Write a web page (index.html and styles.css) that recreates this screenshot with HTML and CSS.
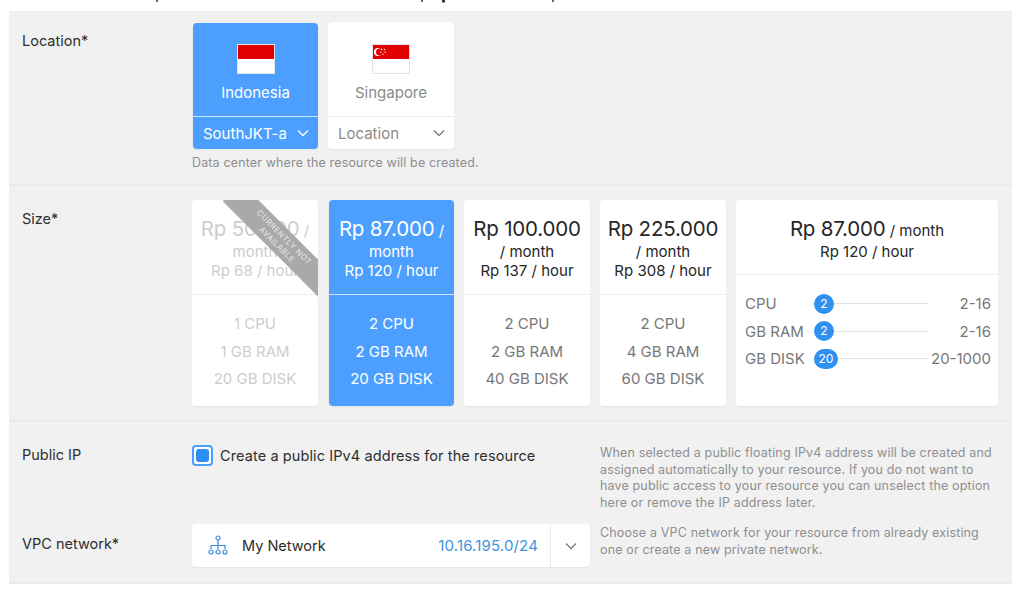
FILE: index.html
```html
<!DOCTYPE html>
<html lang="en">
<head>
    <meta charset="UTF-8">
    <meta name="viewport" content="width=device-width, initial-scale=1.0">
    <title>Create resource</title>
    <link rel="stylesheet" href="styles.css">
</head>
<body>
    <div class="cut-line">
        <span class="cut-a">,</span>
        <span class="cut-b">,</span>
        <span class="cut-c">p</span>
        <span class="cut-d">,</span>
    </div>

    <div class="panel">
        <section class="row row-location">
            <div class="label">Location*</div>
            <div>
                <div class="locations">
                    <div class="loc-card selected">
                        <div class="loc-main">
                            <svg class="flag" viewBox="0 0 38 30">
                                <rect x="0.5" y="0.5" width="37" height="29" fill="#fff" stroke="#e4e4e4"/>
                                <rect x="1" y="1" width="36" height="14" fill="#e10000"/>
                            </svg>
                            <span>Indonesia</span>
                        </div>
                        <div class="loc-select">
                            <span>SouthJKT-a</span>
                            <svg class="chevron" viewBox="0 0 12 8"><path d="M1 1.5l5 5 5-5"/></svg>
                        </div>
                    </div>
                    <div class="loc-card">
                        <div class="loc-main">
                            <svg class="flag" viewBox="0 0 38 30">
                                <rect x="0.5" y="0.5" width="37" height="29" fill="#fff" stroke="#e4e4e4"/>
                                <rect x="1" y="1" width="36" height="14" fill="#e10000"/>
                                <circle cx="6" cy="8" r="4" fill="#fff"/>
                                <circle cx="7.6" cy="8" r="3.6" fill="#e10000"/>
                                <circle cx="9.5" cy="5.5" r=".7" fill="#fff"/>
                                <circle cx="12.4" cy="5.5" r=".7" fill="#fff"/>
                                <circle cx="13.2" cy="8.3" r=".7" fill="#fff"/>
                                <circle cx="11" cy="10.2" r=".7" fill="#fff"/>
                                <circle cx="8.8" cy="8.3" r=".7" fill="#fff"/>
                            </svg>
                            <span>Singapore</span>
                        </div>
                        <div class="loc-select">
                            <span>Location</span>
                            <svg class="chevron" viewBox="0 0 12 8"><path d="M1 1.5l5 5 5-5"/></svg>
                        </div>
                    </div>
                </div>
                <p class="hint hint-location">Data center where the resource will be created.</p>
            </div>
        </section>

        <section class="row row-size">
            <div class="label">Size*</div>
            <div class="sizes">
                <div class="size-card disabled">
                    <div class="ribbon"><span>CURRENTLY NOT AVAILABLE</span></div>
                    <div class="size-price">
                        <div><span class="big">Rp 50.000</span> /</div>
                        <div>month</div>
                        <div>Rp 68 / hour</div>
                    </div>
                    <div class="size-specs">
                        <div>1 CPU</div>
                        <div>1 GB RAM</div>
                        <div>20 GB DISK</div>
                    </div>
                </div>
                <div class="size-card selected">
                    <div class="size-price">
                        <div><span class="big">Rp 87.000</span> /</div>
                        <div>month</div>
                        <div>Rp 120 / hour</div>
                    </div>
                    <div class="size-specs">
                        <div>2 CPU</div>
                        <div>2 GB RAM</div>
                        <div>20 GB DISK</div>
                    </div>
                </div>
                <div class="size-card">
                    <div class="size-price">
                        <div><span class="big">Rp 100.000</span></div>
                        <div>/ month</div>
                        <div>Rp 137 / hour</div>
                    </div>
                    <div class="size-specs">
                        <div>2 CPU</div>
                        <div>2 GB RAM</div>
                        <div>40 GB DISK</div>
                    </div>
                </div>
                <div class="size-card">
                    <div class="size-price">
                        <div><span class="big">Rp 225.000</span></div>
                        <div>/ month</div>
                        <div>Rp 308 / hour</div>
                    </div>
                    <div class="size-specs">
                        <div>2 CPU</div>
                        <div>4 GB RAM</div>
                        <div>60 GB DISK</div>
                    </div>
                </div>
                <div class="size-card custom">
                    <div class="custom-price">
                        <div><span class="big">Rp 87.000</span> / month</div>
                        <div>Rp 120 / hour</div>
                    </div>
                    <div class="custom-sliders">
                        <div class="slider-row">
                            <span class="slider-name">CPU</span>
                            <span class="slider-track"><span class="knob">2</span></span>
                            <span class="slider-range">2-16</span>
                        </div>
                        <div class="slider-row">
                            <span class="slider-name">GB RAM</span>
                            <span class="slider-track"><span class="knob">2</span></span>
                            <span class="slider-range">2-16</span>
                        </div>
                        <div class="slider-row">
                            <span class="slider-name">GB DISK</span>
                            <span class="slider-track"><span class="knob wide">20</span></span>
                            <span class="slider-range">20-1000</span>
                        </div>
                    </div>
                </div>
            </div>
        </section>

        <section class="row-network">
            <div class="net-line net-ip">
                <div class="label">Public IP</div>
                <div class="checkbox-line">
                    <span class="checkbox"><span></span></span>
                    <span>Create a public IPv4 address for the resource</span>
                </div>
                <p class="hint">When selected a public floating IPv4 address will be created and assigned automatically to your resource. If you do not want to have public access to your resource you can unselect the option here or remove the IP address later.</p>
            </div>
            <div class="net-line net-vpc">
                <div class="label">VPC network*</div>
                <div class="vpc-select">
                    <svg class="net-icon" viewBox="0 0 20 22">
                        <circle cx="10" cy="3" r="2"/>
                        <path d="M10 5v9M3 14v-3.500h14V14M10 10.500V14"/>
                        <circle cx="3" cy="17" r="2"/>
                        <circle cx="10" cy="17" r="2"/>
                        <circle cx="17" cy="17" r="2"/>
                    </svg>
                    <span class="vpc-name">My Network</span>
                    <span class="vpc-range">10.16.195.0/24</span>
                    <span class="vpc-arrow">
                        <svg class="chevron" viewBox="0 0 12 8"><path d="M1 1.5l5 5 5-5"/></svg>
                    </span>
                </div>
                <p class="hint">Choose a VPC network for your resource from already existing one or create a new private network.</p>
            </div>
        </section>
    </div>
</body>
</html>
```

FILE: styles.css
```css
body {
    margin: 0;
    height: 593px;
    overflow: hidden;
    background-color: #fff;
    color: #2b2b2b;
    font-family: Inter, "Liberation Sans", sans-serif;
    font-size: 14.500px;
}

/* the line of text cut off by the top edge */
.cut-line {
    height: 11px;
    overflow: hidden;
    position: relative;
    color: #222;
    font-size: 18px;
    line-height: 0;
}

.cut-line span {
    position: absolute;
    top: -7px;
    line-height: 0;
}

.cut-a { left: 155px; }
.cut-b { left: 420px; }
.cut-c { left: 441px; font-weight: 700; }
.cut-d { left: 551px; }

.panel {
    margin: 0 12px 0 9px;
    height: 573px;
    background-color: #f1f1f2;
    border-bottom: 2px solid #ebebeb;
    box-sizing: border-box;
}

.row {
    display: grid;
    grid-template-columns: 170px 1fr;
    padding-left: 13px;
    border-bottom: 2px solid #ebebeb;
    box-sizing: border-box;
}

.row-location {
    height: 175px;
    padding-top: 11px;
}

.row-size {
    height: 236px;
    padding-top: 14px;
}

.label {
    line-height: 20px;
    color: #2e2e2e;
}

.row .label {
    padding-top: 9px;
}

.hint {
    margin: 0;
    color: #8d8d8d;
    font-size: 12.500px;
    line-height: 16.500px;
    letter-spacing: 0.15px;
}

.hint-location {
    margin-top: 6px;
    letter-spacing: 0.14px;
}

/* location cards */
.locations {
    display: flex;
    gap: 10px;
}

.loc-card {
    width: 126px;
    height: 127px;
    background: #fff;
    border-radius: 4px;
    box-shadow: 0 1px 2px rgba(0, 0, 0, 0.06);
    color: #8a8a8a;
    display: flex;
    flex-direction: column;
    font-size: 15px;
}

.loc-card.selected {
    background: #4c9ffe;
    color: #fff;
    width: 125px;
    height: 126px;
    margin: 1px 0 0 1px;
}

.loc-main {
    height: 95px;
    display: flex;
    flex-direction: column;
    align-items: center;
    padding-top: 22px;
    box-sizing: border-box;
    border-bottom: 1px solid #ececec;
}

.selected .loc-main {
    height: 94px;
    padding-top: 21px;
    border-bottom-color: #cfe4ff;
}

.loc-main span {
    margin-top: 9px;
    line-height: 20px;
}

.flag {
    width: 38px;
    height: 30px;
    display: block;
}

.loc-select {
    flex: 1;
    display: flex;
    justify-content: space-between;
    align-items: center;
    padding: 0 9px 0 10px;
}

.chevron {
    width: 12px;
    height: 8px;
    fill: none;
    stroke: #7b7b7b;
    stroke-width: 1.300;
}

.selected .chevron {
    stroke: #fff;
}

/* size cards */
.sizes {
    display: flex;
    gap: 10px;
}

.size-card {
    width: 126px;
    height: 206px;
    background: #fff;
    border-radius: 4px;
    box-shadow: 0 1px 2px rgba(0, 0, 0, 0.06);
    position: relative;
    overflow: hidden;
    text-align: center;
    color: #777;
    font-size: 15px;
}

.size-price {
    height: 95px;
    padding-top: 16px;
    box-sizing: border-box;
    border-bottom: 1px solid #ececec;
    color: #262626;
    line-height: 19px;
}

.big {
    font-size: 20.500px;
    line-height: 26px;
    letter-spacing: -0.2px;
}

.size-specs {
    padding-top: 15px;
    line-height: 27.500px;
}

.size-card.selected {
    background: #4c9ffe;
    width: 125px;
    margin-left: 1px;
}

.selected .size-price,
.selected .size-specs {
    color: #fff;
}

.selected .size-price {
    border-bottom-color: #cfe4ff;
}

.disabled .size-price,
.disabled .size-specs {
    color: #cdcdcd;
}

.ribbon {
    position: absolute;
    top: 32px;
    left: 18px;
    width: 150px;
    height: 26px;
    background: #a9a9a9;
    transform: rotate(45deg);
    color: #e9e9e9;
    font-size: 8px;
    line-height: 10px;
    letter-spacing: 0.5px;
    display: flex;
    align-items: center;
    justify-content: center;
    padding: 0 40px 0 28px;
    box-sizing: border-box;
}

.size-card.custom {
    width: 262px;
}

.custom-price {
    height: 75px;
    padding-top: 16px;
    box-sizing: border-box;
    border-bottom: 1px solid #ececec;
    color: #262626;
    line-height: 19px;
}

.custom-sliders {
    padding: 15px 7px 0 9px;
    text-align: left;
}

.slider-row {
    display: flex;
    align-items: center;
    height: 27.500px;
}

.slider-name {
    width: 69px;
}

.slider-track {
    width: 114px;
    height: 1px;
    background: #e2e2e2;
    display: flex;
    align-items: center;
}

.slider-range {
    flex: 1;
    text-align: right;
}

.knob {
    width: 20px;
    height: 20px;
    border-radius: 10px;
    background: #2f90f0;
    color: #fff;
    font-size: 12px;
    line-height: 20px;
    text-align: center;
    flex-shrink: 0;
}

.knob.wide {
    width: 24px;
}

/* public ip and vpc */
.net-line {
    display: grid;
    grid-template-columns: 160px 398px 1fr;
    column-gap: 10px;
    padding-left: 13px;
    padding-right: 16px;
}

.net-line .hint {
    color: #8f8f8f;
}

.net-ip {
    height: 102px;
    padding-top: 23px;
    box-sizing: border-box;
}

.net-ip .label {
    line-height: 18px;
    padding-top: 1px;
}

.net-vpc {
    height: 44px;
}

.net-vpc .label {
    padding-top: 10px;
}

.net-vpc .hint {
    margin-top: 1px;
}

.checkbox-line {
    display: flex;
    align-items: flex-start;
    gap: 7px;
    line-height: 22px;
    color: #2e2e2e;
    letter-spacing: 0.1px;
}

.checkbox {
    width: 21px;
    height: 21px;
    box-sizing: border-box;
    border: 2px solid #4c9ffe;
    border-radius: 4px;
    background: #fff;
    display: flex;
    align-items: center;
    justify-content: center;
}

.checkbox span {
    width: 13px;
    height: 13px;
    border-radius: 3px;
    background: #2f8ff0;
}

.vpc-select {
    height: 43px;
    background: #fff;
    border-radius: 4px;
    box-shadow: 0 1px 2px rgba(0, 0, 0, 0.06);
    display: flex;
    align-items: center;
    padding-left: 16px;
}

.net-icon {
    width: 20px;
    height: 22px;
    fill: none;
    stroke: #3a8cd6;
    stroke-width: 1.200;
}

.vpc-name {
    margin-left: 14px;
    flex: 1;
}

.vpc-range {
    color: #3d94de;
    font-size: 15px;
    letter-spacing: 0.15px;
}

.vpc-arrow {
    width: 39px;
    height: 43px;
    margin-left: 12px;
    border-left: 1px solid #eaeaea;
    display: flex;
    align-items: center;
    justify-content: center;
}
```
